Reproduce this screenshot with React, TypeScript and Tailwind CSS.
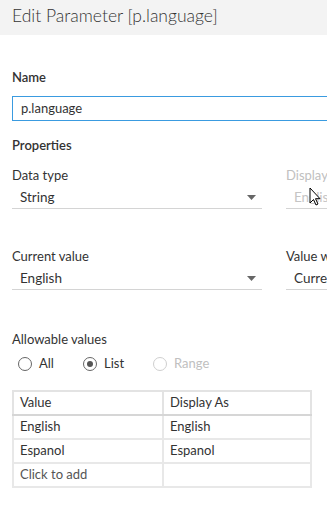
import React from 'react';

const font = { fontFamily: 'Lato, "Open Sans", sans-serif' };

function Caret() {
  return (
    <svg width="9" height="5" viewBox="0 0 9 5" className="shrink-0">
      <path d="M0 0h9L4.5 5z" fill="#666" />
    </svg>
  );
}

function Select({ value, faded }: { value: string; faded?: boolean }) {
  return (
    <div className="flex items-center h-[26px] pt-[4px] pl-2 pr-[6px] border-b border-[#d4d4d4]">
      <span className={`flex-1 text-[13.5px] whitespace-nowrap ${faded ? 'text-[#c5c5c5]' : 'text-[#333]'}`}>{value}</span>
      {!faded && <Caret />}
    </div>
  );
}

function Radio({ label, checked, disabled }: { label: string; checked?: boolean; disabled?: boolean }) {
  return (
    <div className="flex items-center gap-[7px]">
      <span className={`w-[14px] h-[14px] rounded-full border flex items-center justify-center ${disabled ? 'border-[#cfcfcf]' : 'border-[#666]'}`}>
        {checked && <span className="w-[6px] h-[6px] rounded-full bg-[#555]" />}
      </span>
      <span className={`text-[13px] ${disabled ? 'text-[#c0c0c0]' : 'text-[#333]'}`}>{label}</span>
    </div>
  );
}

export default function App() {
  const rows = [
    ['English', 'English'],
    ['Espanol', 'Espanol'],
    ['Click to add', ''],
  ];
  return (
    <div className="w-[327px] h-[510px] overflow-hidden bg-white relative" style={font}>
      <div className="h-[35px] bg-[#f3f3f3] flex items-center pl-3 pb-[3px]">
        <h1 className="text-[17.5px] font-light text-[#333] whitespace-nowrap">Edit Parameter [p.language]</h1>
      </div>

      <div className="pl-3">
        <p className="mt-[34px] text-[13px] font-semibold text-[#333] leading-[16px]">Name</p>
        <div className="mt-[11px] w-[340px] h-[25px] border border-[#3a9be0] flex items-center pl-2">
          <span className="text-[13px] text-[#333]">p.language</span>
        </div>

        <p className="mt-[16px] text-[13px] font-semibold text-[#333] leading-[16px]">Properties</p>

        <div className="flex gap-6 mt-[14px]">
          <div className="w-[250px] shrink-0">
            <p className="text-[13px] text-[#333] leading-[16px]">Data type</p>
            <Select value="String" />
          </div>
          <div className="w-[120px] shrink-0">
            <p className="text-[13px] text-[#c0c0c0] leading-[16px]">Display</p>
            <Select value="English" faded />
          </div>
        </div>

        <div className="flex gap-6 mt-[39px]">
          <div className="w-[250px] shrink-0">
            <p className="text-[13px] text-[#333] leading-[16px]">Current value</p>
            <Select value="English" />
          </div>
          <div className="w-[120px] shrink-0">
            <p className="text-[13px] text-[#333] leading-[16px] whitespace-nowrap">Value when</p>
            <Select value="Current" />
          </div>
        </div>

        <p className="mt-[41px] text-[13px] text-[#333] leading-[16px]">Allowable values</p>
        <div className="flex items-center mt-[9px] pl-[6px] h-[16px]">
          <div className="w-[65px]"><Radio label="All" /></div>
          <div className="w-[70px]"><Radio label="List" checked /></div>
          <Radio label="Range" disabled />
        </div>

        <table className="mt-[18px] w-[300px] border-collapse text-[13px] text-[#333]">
          <thead>
            <tr className="h-[24px]">
              <th className="w-[150px] text-left font-normal pl-[6px] border-2 border-[#e3e3e3] border-b-[#d6d6d6]">Value</th>
              <th className="text-left font-normal pl-[6px] border-2 border-[#e3e3e3] border-b-[#d6d6d6]">Display As</th>
            </tr>
          </thead>
          <tbody>
            {rows.map(([v, d], i) => (
              <tr key={i} className="h-[24px]">
                <td className={`pl-[6px] border-2 border-[#e8e8e8] ${i === 2 ? 'text-[#555]' : ''}`}>{v}</td>
                <td className="pl-[6px] border-2 border-[#e8e8e8]">{d}</td>
              </tr>
            ))}
          </tbody>
        </table>
      </div>

      <svg className="absolute left-[309px] top-[187px]" width="12" height="19" viewBox="0 0 12 19">
        <path d="M1 1v15l3.5-3.5 2.5 5.5 2-1-2.5-5.3H11z" fill="#fff" stroke="#000" strokeWidth="1" strokeLinejoin="round" />
      </svg>
    </div>
  );
}
